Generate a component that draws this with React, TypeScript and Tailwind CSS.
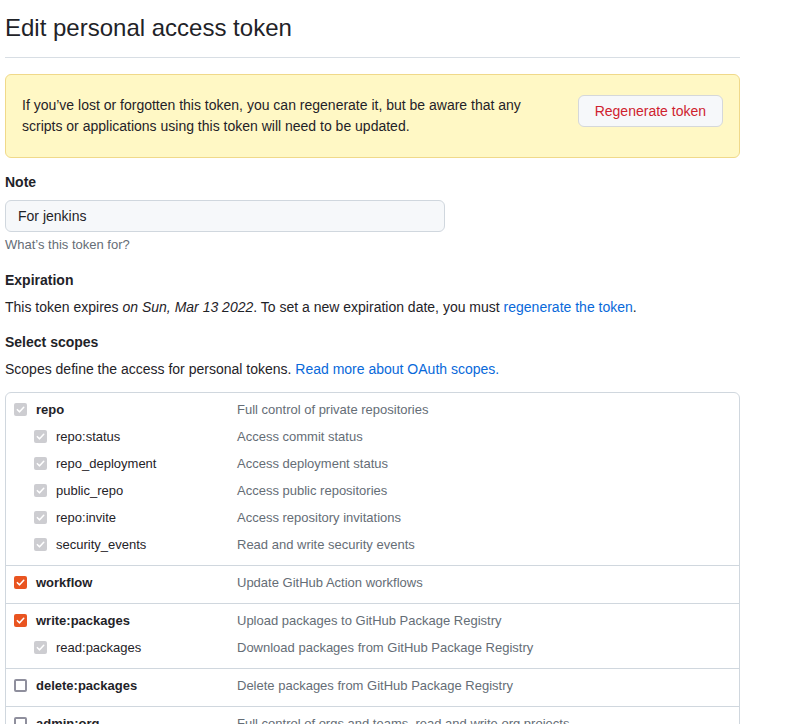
type CheckState = 'locked' | 'on' | 'off';

interface Scope {
  name: string;
  description: string;
  state: CheckState;
  children?: { name: string; description: string; state: CheckState }[];
}

const SCOPES: Scope[] = [
  {
    name: 'repo',
    description: 'Full control of private repositories',
    state: 'locked',
    children: [
      { name: 'repo:status', description: 'Access commit status', state: 'locked' },
      { name: 'repo_deployment', description: 'Access deployment status', state: 'locked' },
      { name: 'public_repo', description: 'Access public repositories', state: 'locked' },
      { name: 'repo:invite', description: 'Access repository invitations', state: 'locked' },
      { name: 'security_events', description: 'Read and write security events', state: 'locked' },
    ],
  },
  { name: 'workflow', description: 'Update GitHub Action workflows', state: 'on' },
  {
    name: 'write:packages',
    description: 'Upload packages to GitHub Package Registry',
    state: 'on',
    children: [
      { name: 'read:packages', description: 'Download packages from GitHub Package Registry', state: 'locked' },
    ],
  },
  { name: 'delete:packages', description: 'Delete packages from GitHub Package Registry', state: 'off' },
  {
    name: 'admin:org',
    description: 'Full control of orgs and teams, read and write org projects',
    state: 'off',
    children: [
      { name: 'write:org', description: 'Read and write org and team membership, read and write org projects', state: 'off' },
      { name: 'read:org', description: 'Read org and team membership, read org projects', state: 'off' },
    ],
  },
];

function Checkbox({ state }: { state: CheckState }) {
  if (state === 'off') {
    return <span className="block h-[13px] w-[13px] shrink-0 rounded-[2px] border-2 border-[#8f8f9d] bg-white" />;
  }
  const bg = state === 'on' ? 'bg-[#e95420]' : 'bg-[#cdcdd1]';
  return (
    <span className={`flex h-[13px] w-[13px] shrink-0 items-center justify-center rounded-[2px] ${bg}`}>
      <svg width="9" height="9" viewBox="0 0 10 10" fill="none">
        <path d="M1.5 5.2 L4 7.6 L8.6 2.6" stroke="white" strokeWidth="1.7" strokeLinecap="round" strokeLinejoin="round" />
      </svg>
    </span>
  );
}

function ScopeRow({ name, description, state, sub }: { name: string; description: string; state: CheckState; sub?: boolean }) {
  return (
    <div className="flex h-[27px] items-center">
      <div className={`flex w-[231px] shrink-0 items-center gap-[9px] ${sub ? 'pl-[28px]' : 'pl-[8px]'}`}>
        <Checkbox state={state} />
        <span className={sub ? 'text-[#1f2328]' : 'font-bold text-[#1f2328]'}>{name}</span>
      </div>
      <span className="text-[#656d76]">{description}</span>
    </div>
  );
}

export default function App() {
  return (
    <div className="min-h-screen bg-white font-['Liberation_Sans',Arial,sans-serif] text-[14px] text-[#1f2328]">
      <div className="w-[735px] ml-[5px] pb-10">
        {/* Header */}
        <div className="border-b border-[#d8dee4] pt-[13px] pb-[14px]">
          <h1 className="text-[24px] leading-[30px] font-normal">Edit personal access token</h1>
        </div>

        {/* Warning flash */}
        <div className="mt-4 flex items-start rounded-[6px] border border-[#f0d98a] bg-[#fff8c5] px-4 py-5">
          <p className="flex-1 mr-10 leading-[21px]">
            If you’ve lost or forgotten this token, you can regenerate it, but be aware that any scripts or applications using this token will need to be updated.
          </p>
          <button className="h-8 shrink-0 rounded-[6px] border border-[#d5d8da] bg-[#f6f8fa] px-4 text-[14px] leading-[30px] text-[#cf222e]">
            Regenerate token
          </button>
        </div>

        {/* Note */}
        <div className="mt-[14px]">
          <label className="block font-bold leading-[21px]">Note</label>
          <input
            readOnly
            value="For jenkins"
            className="mt-[7px] block h-8 w-[440px] rounded-[6px] border border-[#d0d7de] bg-[#f6f8fa] px-3 text-[14px] text-[#1f2328] outline-none"
          />
          <p className="mt-[3px] text-[13px] leading-[20px] text-[#656d76]">What’s this token for?</p>
        </div>

        {/* Expiration */}
        <div className="mt-[15px]">
          <h3 className="font-bold leading-[21px]">Expiration</h3>
          <p className="mt-[6px] leading-[21px]">
            This token expires <em>on Sun, Mar 13 2022</em>. To set a new expiration date, you must{' '}
            <a className="text-[#0969da]">regenerate the token</a>.
          </p>
        </div>

        {/* Scopes */}
        <div className="mt-[14px]">
          <h3 className="font-bold leading-[21px]">Select scopes</h3>
          <p className="mt-[6px] leading-[21px]">
            Scopes define the access for personal tokens.{' '}
            <a className="text-[#0969da]">Read more about OAuth scopes.</a>
          </p>
        </div>

        <div className="mt-[12px] rounded-[6px] border border-[#d0d7de] text-[13px]">
          {SCOPES.map((scope, i) => (
            <div key={scope.name} className={`pt-[3px] pb-[7px] ${i > 0 ? 'border-t border-[#d0d7de]' : ''}`}>
              <ScopeRow name={scope.name} description={scope.description} state={scope.state} />
              {scope.children?.map((c) => (
                <ScopeRow key={c.name} name={c.name} description={c.description} state={c.state} sub />
              ))}
            </div>
          ))}
        </div>
      </div>
    </div>
  );
}
